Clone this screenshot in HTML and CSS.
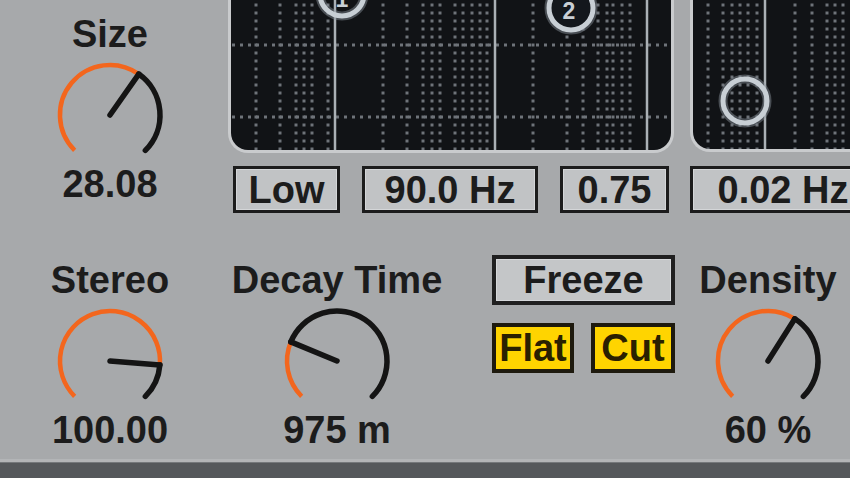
FILE: index.html
```html
<!DOCTYPE html>
<html>
<head>
<meta charset="utf-8">
<title>Reverb</title>
<link rel="stylesheet" href="styles.css">
</head>
<body>
<div class="device">
  <div class="row top">
    <div class="knob size">
      <div class="label">Size</div>
      <svg class="dial" viewBox="0 0 120 112" width="120" height="112">
        <path class="arc-on" d="M24.64 97.36A50 50 0 0 1 88.75 21.09"/>
        <path class="arc-off" d="M88.75 21.09A50 50 0 0 1 95.36 97.36"/>
        <path class="needle" d="M60 62L88.75 21.09"/>
      </svg>
      <div class="value">28.08</div>
    </div>

    <div class="filter">
      <div class="panel p1">
        <svg class="grid" viewBox="0 0 440 150" width="440" height="150">
          <path class="dots" d="M25 3.5V150M49 3.5V150M65 3.5V150M73 3.5V150M81 3.5V150M97 3.5V150M152 3.5V150M176 3.5V150M192 3.5V150M201 3.5V150M209 3.5V150M224 3.5V150M232 3.5V150M241 3.5V150M249 3.5V150M256 3.5V150M302 3.5V150M336 3.5V150M352 3.5V150M367 3.5V150M376 3.5V150M382 3.5V150M391 3.5V150M399 3.5V150"/>
          <path class="dots" d="M1 45H440M1 117H440"/>
          <path class="solid" d="M104 0V150M264 0V150M416 0V150"/>
          <circle class="glow" cx="111" cy="-6" r="22"/>
          <circle class="ring" cx="111" cy="-6" r="22"/>
          <text class="num" x="111" y="7">1</text>
          <circle class="glow" cx="340" cy="8" r="22"/>
          <circle class="ring filled" cx="340" cy="8" r="22"/>
          <text class="num" x="338" y="19">2</text>
        </svg>
      </div>
      <div class="boxes">
        <div class="box b-low">Low</div>
        <div class="box b-freq">90.0 Hz</div>
        <div class="box b-q">0.75</div>
      </div>
    </div>

    <div class="mod">
      <div class="panel p2">
        <svg class="grid" viewBox="0 0 177 149" width="177" height="149">
          <path class="dots" d="M15 3.5V149M30 3.5V149M39 3.5V149M47 3.5V149M55 3.5V149M64 3.5V149M102 3.5V149M119 3.5V149M134 3.5V149M142 3.5V149M150 3.5V149"/>
          <path class="solid" d="M72 0V149"/>
          <circle class="glow" cx="52" cy="101" r="22"/>
          <circle class="ring" cx="52" cy="101" r="22"/>
        </svg>
      </div>
      <div class="boxes">
        <div class="box b-rate">0.02 Hz</div>
      </div>
    </div>
  </div>

  <div class="row bottom">
    <div class="knob stereo">
      <div class="label">Stereo</div>
      <svg class="dial" viewBox="0 0 120 112" width="120" height="112">
        <path class="arc-on" d="M24.64 97.36A50 50 0 1 1 109.85 65.92"/>
        <path class="arc-off" d="M109.85 65.92A50 50 0 0 1 95.36 97.36"/>
        <path class="needle" d="M60 62L109.85 65.92"/>
      </svg>
      <div class="value">100.00</div>
    </div>

    <div class="knob decay">
      <div class="label">Decay Time</div>
      <svg class="dial" viewBox="0 0 120 112" width="120" height="112">
        <path class="arc-on" d="M24.64 97.36A50 50 0 0 1 13.81 42.87"/>
        <path class="arc-off" d="M13.81 42.87A50 50 0 1 1 95.36 97.36"/>
        <path class="needle" d="M60 62L13.81 42.87"/>
      </svg>
      <div class="value">975 m</div>
    </div>

    <div class="switches">
      <div class="btn freeze">Freeze</div>
      <div class="toggles">
        <div class="btn on flat">Flat</div>
        <div class="btn on cut">Cut</div>
      </div>
    </div>

    <div class="knob density">
      <div class="label">Density</div>
      <svg class="dial" viewBox="0 0 120 112" width="120" height="112">
        <path class="arc-on" d="M24.64 97.36A50 50 0 0 1 86.79 19.78"/>
        <path class="arc-off" d="M86.79 19.78A50 50 0 0 1 95.36 97.36"/>
        <path class="needle" d="M60 62L86.79 19.78"/>
      </svg>
      <div class="value">60 %</div>
    </div>
  </div>

  <div class="footer"></div>
</div>
</body>
</html>
```

FILE: styles.css
```css
* {
  box-sizing: border-box;
  margin: 0;
  padding: 0;
}

html, body {
  width: 850px;
  height: 478px;
  overflow: hidden;
}

body {
  background: #a7a9ab;
  font-family: "Liberation Sans", Arial, sans-serif;
  font-weight: 700;
  color: #1c1c1c;
}

.device {
  display: flex;
  flex-direction: column;
  width: 850px;
  height: 478px;
}

.row {
  display: flex;
  align-items: flex-start;
  flex-shrink: 0;
}

.row > * {
  flex-shrink: 0;
}

.top {
  height: 240px;
}

.bottom {
  height: 219px;
}

.footer {
  flex: 1;
  background: #55585b;
  border-top: 3px solid #b3b5b7;
  box-shadow: inset 0 1px 0 #75787b;
}

/* knobs */
.knob {
  display: flex;
  flex-direction: column;
  align-items: center;
}

.label,
.value {
  font-size: 38px;
  line-height: 38px;
  white-space: nowrap;
}

.dial {
  display: block;
  width: 120px;
  height: 112px;
  overflow: visible;
}

.arc-on {
  fill: none;
  stroke: #f3661d;
  stroke-width: 4.5;
}

.arc-off {
  fill: none;
  stroke: #141414;
  stroke-width: 5.5;
  stroke-linecap: round;
}

.needle {
  fill: none;
  stroke: #141414;
  stroke-width: 5.5;
  stroke-linecap: round;
}

.size {
  width: 220px;
  padding-top: 15px;
}

.stereo {
  width: 220px;
  padding-top: 21px;
}

.decay {
  width: 234px;
  padding-top: 21px;
}

.density {
  width: 156px;
  margin-left: 15px;
  padding-top: 21px;
}

/* displays */
.filter {
  width: 446px;
  margin-left: 8px;
}

.mod {
  width: 186px;
  margin-left: 16px;
}

.panel {
  background: #111316;
  border: 3px solid #c9cbcd;
  border-top: 0;
  overflow: hidden;
}

.p1 {
  width: 446px;
  height: 153px;
  border-radius: 0 0 20px 20px;
}

.p2 {
  width: 186px;
  height: 152px;
  border-right: 0;
  border-radius: 0 0 0 20px;
}

.grid {
  display: block;
}

.dots {
  fill: none;
  stroke: #6e7379;
  stroke-width: 3;
  stroke-dasharray: 3 5;
}

.solid {
  fill: none;
  stroke: #aab0b5;
  stroke-width: 2.5;
}

.glow {
  fill: none;
  stroke: #8c959e;
  stroke-opacity: 0.45;
  stroke-width: 9;
}

.ring {
  fill: none;
  stroke: #c8cfd5;
  stroke-width: 5;
}

.ring.filled {
  fill: #13171c;
}

.num {
  fill: #c8cfd5;
  font-family: "Liberation Sans", Arial, sans-serif;
  font-weight: 700;
  font-size: 23px;
  text-anchor: middle;
}

/* value boxes */
.boxes {
  display: flex;
  gap: 22px;
  margin-top: 13px;
  padding-left: 5px;
}

.mod .boxes {
  margin-top: 14px;
  padding-left: 0;
}

.box {
  height: 47px;
  display: flex;
  align-items: center;
  justify-content: center;
  border: 3px solid #1c1c1c;
  background: #c1c3c5;
  box-shadow: inset 0 0 0 1px #d4d6d8;
  font-size: 38px;
  line-height: 38px;
  white-space: nowrap;
}

.b-low { width: 107px; }
.b-freq { width: 176px; }
.b-q { width: 109px; }
.b-rate { width: 186px; }

/* buttons */
.switches {
  width: 183px;
  margin-left: 38px;
  padding-top: 15px;
}

.btn {
  height: 50px;
  display: flex;
  align-items: center;
  justify-content: center;
  border: 4px solid #202020;
  background: #c4c6c8;
  box-shadow: inset 0 0 0 1px #d6d8da;
  font-size: 38px;
  line-height: 38px;
  white-space: nowrap;
}

.toggles {
  display: flex;
  gap: 17px;
  margin-top: 18px;
}

.btn.on {
  background: #ffd400;
  border-color: #1e1a0e;
  box-shadow: none;
  color: #2a2000;
}

.flat { width: 82px; }
.cut { width: 84px; }
```
